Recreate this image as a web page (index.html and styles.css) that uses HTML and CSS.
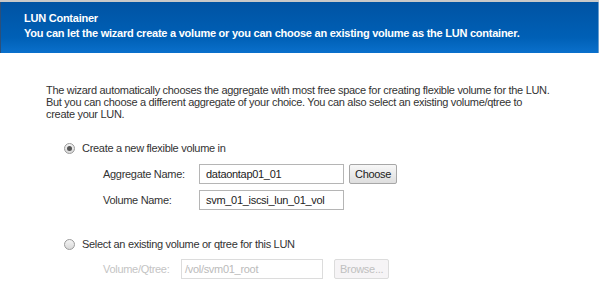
FILE: index.html
```html
<!DOCTYPE html>
<html>
<head>
<meta charset="utf-8">
<link rel="stylesheet" href="styles.css">
</head>
<body>
<div class="page">
  <div class="header">
    <div class="title">LUN Container</div>
    <div class="subtitle">You can let the wizard create a volume or you can choose an existing volume as the LUN container.</div>
  </div>
  <div class="content">
    <p class="intro">The wizard automatically chooses the aggregate with most free space for creating flexible volume for the LUN.<br>But you can choose a different aggregate of your choice. You can also select an existing volume/qtree to<br>create your LUN.</p>
    <div class="option">
      <span class="radio checked"></span>
      <span class="opt-label">Create a new flexible volume in</span>
    </div>
    <div class="fields">
      <div class="field">
        <span class="flabel">Aggregate Name:</span>
        <span class="input">dataontap01_01</span>
        <span class="button">Choose</span>
      </div>
      <div class="field">
        <span class="flabel">Volume Name:</span>
        <span class="input">svm_01_iscsi_lun_01_vol</span>
      </div>
    </div>
    <div class="option second">
      <span class="radio"></span>
      <span class="opt-label">Select an existing volume or qtree for this LUN</span>
    </div>
    <div class="fields disabled">
      <div class="field">
        <span class="flabel short">Volume/Qtree:</span>
        <span class="input dis">/vol/svm01_root</span>
        <span class="button dis">Browse...</span>
      </div>
    </div>
  </div>
</div>
</body>
</html>
```
FILE: styles.css
```css
html, body { margin: 0; padding: 0; background: #fff; }
body { font-family: "Liberation Sans", Arial, sans-serif; font-size: 11px; color: #333; letter-spacing: -0.3px; }
.page { width: 599px; height: 287px; overflow: hidden; border-top: 2px solid #c9c9c9; box-sizing: border-box; }
.header {
  height: 51px; box-sizing: border-box;
  padding: 9px 0 0 23px;
  background: linear-gradient(#0053a3, #0060b6 70%, #0a70cc);
  border-left: 1px solid #2b4f7a; border-right: 1px solid #6a9fd0;
  color: #fff; font-weight: bold; font-size: 11px; line-height: 15px; letter-spacing: -0.24px;
}
.content { padding: 31px 0 0 46px; }
.intro { margin: 0; line-height: 12px; color: #333; }
.option { display: flex; align-items: center; margin: 21px 0 0 18px; height: 14px; }
.option.second { margin-top: 27px; }
.radio {
  width: 11px; height: 11px; border-radius: 50%; box-sizing: border-box;
  border: 1px solid #9a9a9a; background: linear-gradient(#f4f4f4, #d9d9d9);
  position: relative; margin-right: 7px;
}
.radio.checked::after {
  content: ""; position: absolute; left: 2px; top: 2px; width: 5px; height: 5px; border-radius: 50%;
  background: #555;
}
.opt-label { color: #333; }
.fields { margin: 9px 0 0 57px; display: flex; flex-direction: column; gap: 6px; }
.fields.disabled { margin-top: 8px; }
.field { display: flex; align-items: center; height: 20px; }
.flabel { width: 96px; color: #333; }
.flabel.short { width: 78px; color: #c4c4c4; }
.input {
  width: 145px; height: 20px; box-sizing: border-box; border: 1px solid #b5b5b5;
  padding: 0 6px; line-height: 18px; color: #222;
}
.input.dis { width: 142px; border-color: #dcdcdc; color: #bbb; padding-left: 3px; }
.button {
  margin-left: 5px; height: 20px; box-sizing: border-box; padding: 0 5px; line-height: 18px;
  border: 1px solid #a7a7a7; border-radius: 2px; background: linear-gradient(#f7f7f7, #dedede); color: #222;
}
.button.dis { margin-left: 11px; border-color: #dcdcdc; background: #f6f4f6; color: #c0c0c0; }
```
